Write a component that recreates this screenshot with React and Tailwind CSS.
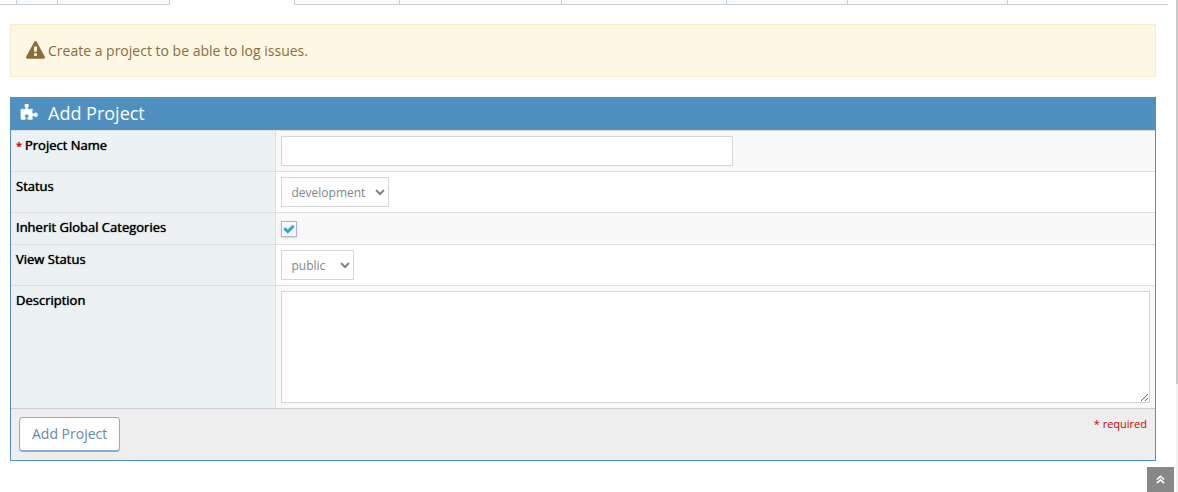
import React from "react";

const tabs = [
  { name: "Tab 1", width: "w-[17px]" },
  { name: "Tab 2", width: "w-[41px]" },
  { name: "Tab 3", width: "w-[112px]" },
  { name: "Tab 4", width: "w-[125px]", active: true },
  { name: "Tab 5", width: "w-[105px]" },
  { name: "Tab 6", width: "w-[162px]" },
  { name: "Tab 7", width: "w-[165px]" },
  { name: "Tab 8", width: "w-[121px]" },
  { name: "Tab 9", width: "w-[160px]" },
];

function TabStrip() {
  return (
    <div className="mr-2 flex h-[5px]">
      {tabs.map((tab, i) => (
        <div
          key={tab.name}
          className={
            "shrink-0 border-r border-[#c5d0dc] " +
            tab.width +
            (tab.active ? " bg-white" : i === 0 ? " border-b bg-white" : " border-b bg-[#f9f9f9]")
          }
        />
      ))}
      <div className="grow border-b border-[#c5d0dc]" />
    </div>
  );
}

function WarningIcon() {
  return (
    <svg viewBox="0 0 1792 1792" className="size-[19px] shrink-0" fill="currentColor" aria-hidden="true">
      <path d="M1024 1375v-190q0-14-9.5-23.5t-22.5-9.5h-192q-13 0-22.5 9.5t-9.5 23.5v190q0 14 9.5 23.5t22.5 9.5h192q13 0 22.5-9.5t9.5-23.5zm-2-374l18-459q0-12-10-19-13-11-24-11h-220q-11 0-24 11-10 7-10 21l17 457q0 10 10 16.5t24 6.5h185q14 0 23.5-6.5t10.5-16.5zm-14-934l768 1408q35 63-2 126-17 29-46.5 46t-63.5 17h-1536q-34 0-63.5-17t-46.5-46q-37-63-2-126l768-1408q17-31 47-49t65-18 65 18 47 49z" />
    </svg>
  );
}

function PuzzleIcon() {
  return (
    <svg viewBox="0 0 1792 1792" className="size-[18px] shrink-0" fill="currentColor" stroke="currentColor" strokeWidth="50" aria-hidden="true">
      <path d="M1755 1083q0 81-44.5 135t-123.5 54q-41 0-77.5-17.5t-59-38-56.5-38-71-17.5q-110 0-110 124 0 39 16 115t15 115v5q-22 0-33 1-34 3-97.5 11.5t-115.5 13.5-98 5q-61 0-103-26.5t-42-83.5q0-37 17.5-71t38-56.5 38-59 17.5-77.5q0-79-54-123.5t-135-44.5q-84 0-143 45.5t-59 127.5q0 43 15 83t33.5 64.5 33.5 53 15 50.5q0 45-46 89-37 35-117 35-95 0-245-24-9-2-27.5-4t-27.5-4l-13-2q-1 0-3-1-2 0-2-1v-1024q2 1 17.5 3.5t34 5 21.5 3.5q150 24 245 24 80 0 117-35 46-44 46-89 0-22-15-50.5t-33.5-53-33.5-64.5-15-83q0-82 59-127.5t144-45.5q80 0 134 44.5t54 123.5q0 41-17.5 77.5t-38 59-38 56.5-17.5 71q0 57 42 83.5t103 26.5q64 0 180-15t163-17v2q-1 2-3.5 17.5t-5 34-3.5 21.5q-24 150-24 245 0 80 35 117 44 46 89 46 22 0 50.5-15t53-33.5 64.5-33.5 83-15q82 0 127.5 59t45.5 143z" />
    </svg>
  );
}

function Row({ label, htmlFor, required, shaded, children }) {
  return (
    <tr className="border-t border-[#dddddd]">
      <th scope="row" className="w-[264px] bg-[#ecf2f4] px-[5px] py-1 text-left align-top leading-5 font-medium text-black [text-shadow:0_0_1px_currentColor]">
        {required && <span className="text-[11px] text-[#cc0000]">* </span>}
        <label htmlFor={htmlFor}>{label}</label>
      </th>
      <td className={"border-l border-[#dddddd] p-[5px] align-top " + (shaded ? "bg-[#f9f9f9]" : "bg-white")}>
        {children}
      </td>
    </tr>
  );
}

const selectClass =
  "block h-[30px] border border-[#d5d5d5] bg-white px-[6px] text-xs text-[#858585] ";

export default function App() {
  const [inherit, setInherit] = React.useState(true);
  return (
    <div className="flex min-h-screen bg-white font-['Open_Sans',sans-serif] text-[13px] text-[#393939]">
      <div className="min-w-0 grow">
        <TabStrip />
        <main className="mr-5 ml-[10px] pt-[19px]">
          <div className="mb-5 flex items-center gap-[3px] border border-[#faebcc] bg-[#fdf7e3] p-[15px] text-sm leading-[21px] text-[#8a6d3b]">
            <WarningIcon />
            <p>Create a project to be able to log issues.</p>
          </div>

          <form onSubmit={(e) => e.preventDefault()} className="border border-t-0 border-[#4f90c1]">
            <h4 className="flex h-[33px] items-center gap-[10px] bg-[#4f90c1] px-[9px] pb-[2px] text-lg text-white">
              <PuzzleIcon />
              Add Project
            </h4>
            <table className="w-full table-fixed border-collapse">
              <tbody>
                <Row label="Project Name" htmlFor="project-name" required shaded>
                  <input
                    id="project-name"
                    type="text"
                    className="block h-[30px] w-[452px] max-w-full border border-[#d5d5d5] bg-white px-1"
                  />
                </Row>
                <Row label="Status" htmlFor="project-status">
                  <select id="project-status" className={selectClass + "w-[108px]"}>
                    <option>development</option>
                  </select>
                </Row>
                <Row label="Inherit Global Categories" htmlFor="inherit-global" shaded>
                  <div className="relative mt-[3px] mb-[2px] size-4">
                    <input
                      id="inherit-global"
                      type="checkbox"
                      checked={inherit}
                      onChange={(e) => setInherit(e.target.checked)}
                      className="block size-4 appearance-none border border-[#adb8c0] bg-[#f4f9ff] shadow-sm"
                    />
                    {inherit && (
                      <svg
                        viewBox="0 0 1792 1792"
                        className="pointer-events-none absolute inset-[2px] size-3 text-[#32a3ce]"
                        fill="currentColor"
                        stroke="currentColor"
                        strokeWidth="70"
                        aria-hidden="true"
                      >
                        <path d="M1671 566q0 40-28 68l-724 724-136 136q-28 28-68 28t-68-28l-136-136-362-362q-28-28-28-68t28-68l136-136q28-28 68-28t68 28l294 295 656-657q28-28 68-28t68 28l136 136q28 28 28 68z" />
                      </svg>
                    )}
                  </div>
                </Row>
                <Row label="View Status" htmlFor="view-status">
                  <select id="view-status" className={selectClass + "w-[73px]"}>
                    <option>public</option>
                  </select>
                </Row>
                <Row label="Description" htmlFor="description" shaded>
                  <textarea
                    id="description"
                    className="block h-[112px] w-full border border-[#d5d5d5] bg-white px-1"
                  />
                </Row>
              </tbody>
            </table>
            <div className="flex items-start justify-between border-t border-[#cccccc] bg-[#eeeeee] p-2">
              <button
                type="submit"
                className="h-[35px] rounded border border-b-2 border-[#8aafce] bg-white px-3 text-sm text-[#6688a6]"
              >
                Add Project
              </button>
              <span className="text-[11px] leading-[14px] text-[#cc0000]">* required</span>
            </div>
          </form>
        </main>
      </div>

      <div className="w-[2px] shrink-0 bg-[#f1f1f1]">
        <div className="h-[384px] bg-[#c9c9c9]" />
      </div>

      <button
        type="button"
        aria-label="Scroll to top"
        className="fixed right-1 bottom-0 flex h-[25px] w-[27px] items-center justify-center bg-[#888888] pb-px text-white"
      >
        <svg viewBox="0 0 10 10" className="size-[9px]" fill="none" stroke="currentColor" strokeWidth="1.8" aria-hidden="true">
          <path d="M1 5 5 1.5 9 5M1 9 5 5.5 9 9" />
        </svg>
      </button>
    </div>
  );
}
